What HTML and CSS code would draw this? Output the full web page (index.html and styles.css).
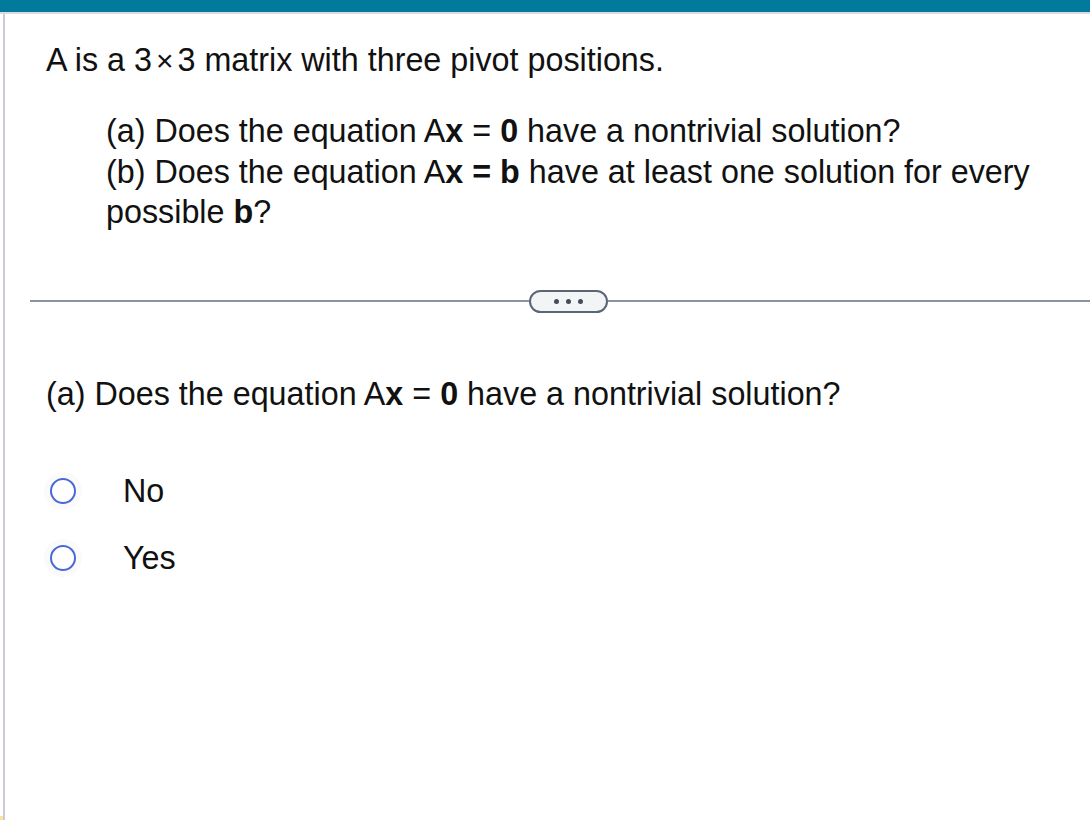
FILE: index.html
```html
<!DOCTYPE html>
<html>
<head>
<meta charset="utf-8">
<link rel="stylesheet" href="styles.css">
</head>
<body>
<div class="topbar"></div>
<div class="page">
  <div class="content">
    <p class="intro">A is a 3<span class="times">×</span>3 matrix with three pivot positions.</p>
    <div class="parts">
      <div>(a) Does the equation A<b>x</b> = <b>0</b> have a nontrivial solution?</div>
      <div>(b) Does the equation A<b>x = b</b> have at least one solution for every possible <b>b</b>?</div>
    </div>
  </div>
  <div class="divider">
    <span class="line short"></span>
    <span class="pill"><i></i><i></i><i></i></span>
    <span class="line"></span>
  </div>
  <div class="content">
    <p class="question">(a) Does the equation A<b>x</b> = <b>0</b> have a nontrivial solution?</p>
    <div class="options">
      <label class="option"><span class="radio"></span><span>No</span></label>
      <label class="option"><span class="radio"></span><span>Yes</span></label>
    </div>
  </div>
  <span class="corner"></span>
</div>
</body>
</html>
```
FILE: styles.css
```css
html, body {
  margin: 0;
  padding: 0;
  background: #ffffff;
}
body {
  font-family: "Liberation Sans", Arial, sans-serif;
  font-size: 32.3px;
  color: #111111;
  width: 1090px;
  height: 820px;
  overflow: hidden;
}
.topbar {
  height: 12px;
  background: #017a9b;
  border-bottom: 2px solid #d9dde3;
}
.page {
  position: relative;
  height: 806px;
  margin-left: 3px;
  border-left: 2px solid #c8ccd9;
}
.content {
  padding-left: 41px;
}
.intro {
  margin: 0;
  padding-top: 28px;
  line-height: 36px;
}
.times {
  font-size: 30px;
  padding: 0 4px;
}
.parts {
  margin-top: 32px;
  padding-left: 60px;
  padding-right: 20px;
  line-height: 40.5px;
}
b {
  font-weight: bold;
}
.divider {
  display: flex;
  align-items: center;
  margin-top: 56.5px;
  padding-left: 25px;
  height: 24px;
}
.line {
  flex: 1;
  height: 2px;
  background: #8a93a3;
}
.line.short {
  flex: 0 0 499px;
}
.pill {
  display: flex;
  align-items: center;
  justify-content: center;
  gap: 7px;
  width: 75px;
  height: 19px;
  border: 2px solid #5a6677;
  border-radius: 12px;
  background: #f3f4f6;
}
.pill i {
  width: 5px;
  height: 5px;
  border-radius: 50%;
  background: #444c58;
}
.question {
  margin: 0;
  padding-top: 63px;
  line-height: 36px;
}
.options {
  margin-top: 61px;
  display: flex;
  flex-direction: column;
  gap: 31px;
}
.option {
  display: flex;
  align-items: center;
  height: 36px;
  margin-left: -41px;
}
.radio {
  box-sizing: border-box;
  width: 26px;
  height: 26px;
  margin-left: 45px;
  margin-right: 47px;
  border: 2.5px solid #4a68d8;
  border-radius: 50%;
  box-shadow: 0 0 0 6px #fafafa;
  filter: blur(0.4px);
}
.corner {
  position: absolute;
  left: -5px;
  bottom: 0;
  width: 3px;
  height: 4px;
  background: #fbe3a0;
}
```
